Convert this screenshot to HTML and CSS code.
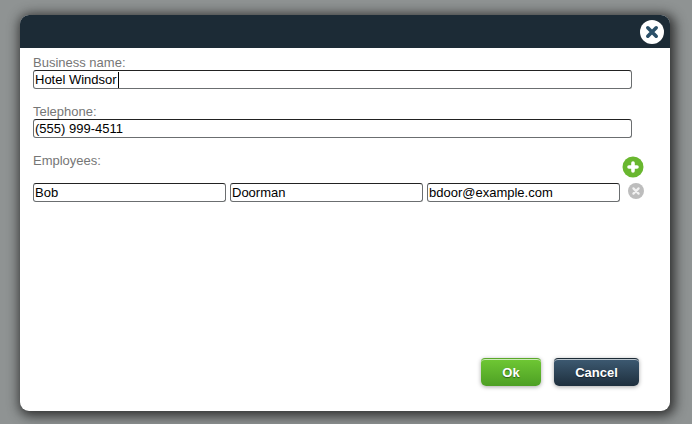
FILE: index.html
```html
<!DOCTYPE html>
<html lang="en">
<head>
    <meta charset="UTF-8">
    <title>Edit business</title>
    <link rel="stylesheet" href="styles.css">
</head>
<body>
    <div class="dialog">
        <div class="dialog-header">
            <button class="close-btn" type="button" aria-label="Close">
                <svg width="14" height="14" viewBox="0 0 14 14">
                    <path d="M2.8 2.8L11.2 11.2M11.2 2.8L2.8 11.2" stroke="#2b5069" stroke-width="3.6" stroke-linecap="round"/>
                </svg>
            </button>
        </div>
        <form class="dialog-body">
            <div class="field">
                <label class="field-label">Business name:</label>
                <div class="input-wrap">
                    <input class="text-input" type="text" value="Hotel Windsor">
                    <span class="caret"></span>
                </div>
            </div>
            <div class="field">
                <label class="field-label">Telephone:</label>
                <input class="text-input" type="text" value="(555) 999-4511">
            </div>
            <div class="employees-head">
                <span class="field-label">Employees:</span>
                <button class="icon-btn add-btn" type="button" aria-label="Add employee">
                    <svg width="22" height="22" viewBox="0 0 22 22">
                        <circle cx="11" cy="11" r="10.5" fill="#69b72f"/>
                        <path d="M11 7V15M7 11H15" stroke="#fff" stroke-width="3.6" stroke-linecap="round"/>
                    </svg>
                </button>
            </div>
            <div class="employee-row">
                <input class="text-input" type="text" value="Bob">
                <input class="text-input" type="text" value="Doorman">
                <input class="text-input" type="text" value="bdoor@example.com">
                <button class="icon-btn remove-btn" type="button" aria-label="Remove employee">
                    <svg width="16" height="16" viewBox="0 0 16 16">
                        <circle cx="8" cy="8" r="8" fill="#bdbdbd"/>
                        <path d="M5.4 5.4L10.6 10.6M10.6 5.4L5.4 10.6" stroke="#f2f2f2" stroke-width="2.2" stroke-linecap="round"/>
                    </svg>
                </button>
            </div>
            <div class="dialog-actions">
                <button class="btn btn-ok" type="button">Ok</button>
                <button class="btn btn-cancel" type="button">Cancel</button>
            </div>
        </form>
    </div>
</body>
</html>
```

FILE: styles.css
```css
* {
    margin: 0;
    padding: 0;
    box-sizing: border-box;
}

body {
    width: 692px;
    height: 424px;
    padding: 15px 22px 13px 20px;
    background: #8f9393;
    font-family: "Liberation Sans", Arial, sans-serif;
    overflow: hidden;
}

.dialog {
    height: 396px;
    display: flex;
    flex-direction: column;
    background: #fff;
    border-radius: 9px;
    overflow: hidden;
    box-shadow: 2px 2px 12px 3px rgba(25, 25, 25, 0.8);
}

.dialog-header {
    height: 33px;
    flex-shrink: 0;
    display: flex;
    justify-content: flex-end;
    align-items: center;
    padding-right: 6px;
    background: #1c2b36;
}

.close-btn {
    width: 24px;
    height: 24px;
    margin-top: 1px;
    display: flex;
    align-items: center;
    justify-content: center;
    border: 0;
    border-radius: 50%;
    background: #fff;
}

.dialog-body {
    flex: 1;
    display: flex;
    flex-direction: column;
    padding: 7px 38px 0 13px;
}

.field {
    margin-bottom: 15px;
}

.field-label {
    display: block;
    height: 15px;
    font-size: 13px;
    line-height: 15px;
    color: #767676;
}

.input-wrap {
    position: relative;
}

.caret {
    position: absolute;
    left: 85px;
    top: 2px;
    width: 1px;
    height: 16px;
    background: #000;
}

.text-input {
    display: block;
    width: 100%;
    height: 19px;
    padding: 0 1px;
    border: 1px solid #6b6e70;
    border-top-color: #222;
    border-radius: 3px;
    background: #fff;
    font-family: inherit;
    font-size: 13px;
    color: #000;
    outline: none;
}

.employees-head {
    height: 30px;
    display: flex;
    justify-content: space-between;
    margin-right: -12px;
}

.icon-btn {
    display: flex;
    border: 0;
    background: none;
}

.add-btn {
    margin-top: 3px;
}

.employee-row {
    display: flex;
    gap: 4px;
    position: relative;
    padding-right: 12px;
}

.employee-row .text-input {
    flex: 1;
    min-width: 0;
}

.remove-btn {
    position: absolute;
    right: -12px;
    top: 0;
}

.dialog-actions {
    margin-top: auto;
    margin-bottom: 25px;
    margin-right: -7px;
    display: flex;
    justify-content: flex-end;
    gap: 13px;
}

.btn {
    height: 28px;
    border: 0;
    border-top: 1px solid;
    border-radius: 4px 4px 5px 5px;
    font-family: inherit;
    font-size: 13px;
    font-weight: bold;
    color: #fff;
    text-shadow: 0 1px 1px rgba(0, 0, 0, 0.45);
}

.btn-ok {
    width: 60px;
    border-top-color: #5aa82a;
    background: linear-gradient(to bottom, #6fc834, #4d9f24);
    box-shadow: inset 0 1px 0 rgba(255, 255, 255, 0.65), 0 1px 4px rgba(0, 0, 0, 0.35);
}

.btn-cancel {
    width: 85px;
    border-top-color: #1c2b36;
    background: linear-gradient(to bottom, #3d5a72, #1e2f3d);
    box-shadow: inset 0 1px 0 rgba(255, 255, 255, 0.65), 0 1px 4px rgba(0, 0, 0, 0.35);
}
```
